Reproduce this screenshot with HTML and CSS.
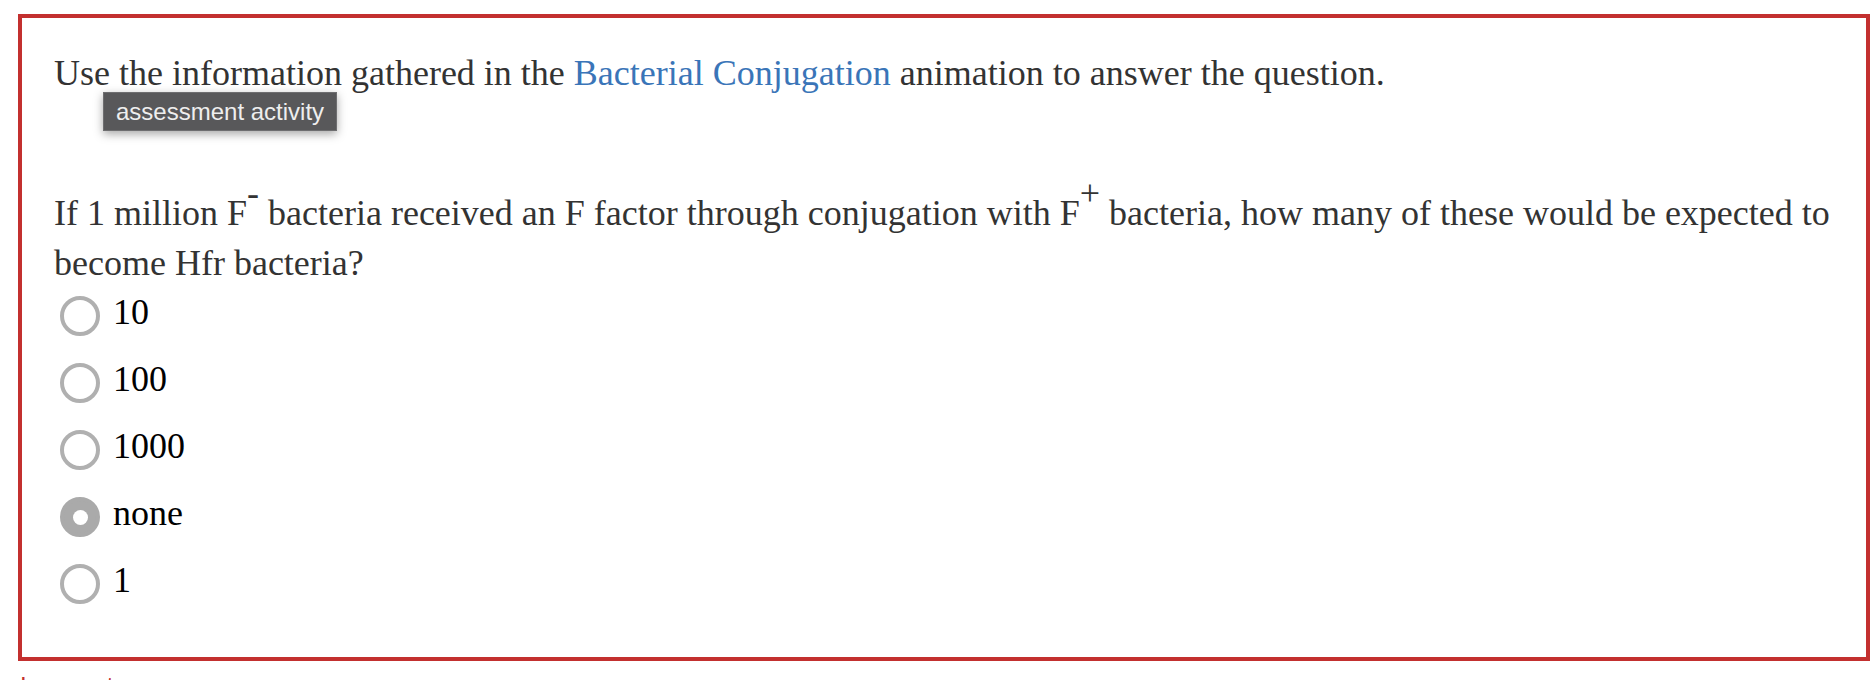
FILE: index.html
```html
<!DOCTYPE html>
<html>
<head>
<meta charset="utf-8">
<link rel="stylesheet" href="styles.css">
</head>
<body>
<div class="question">
  <p class="intro">Use the information gathered in the <a class="link" href="#">Bacterial Conjugation</a> animation to answer the question.</p>
  <div class="tooltip">assessment activity</div>
  <p class="stem">If 1 million F<sup class="sup">-</sup> bacteria received an F factor through conjugation with F<sup class="sup">+</sup> bacteria, how many of these would be expected to become Hfr bacteria?</p>
  <ul class="options">
    <li class="option"><span class="radio"></span><span class="label">10</span></li>
    <li class="option"><span class="radio"></span><span class="label">100</span></li>
    <li class="option"><span class="radio"></span><span class="label">1000</span></li>
    <li class="option"><span class="radio checked"></span><span class="label">none</span></li>
    <li class="option"><span class="radio"></span><span class="label">1</span></li>
  </ul>
</div>
<div class="feedback">Incorrect</div>
</body>
</html>
```
FILE: styles.css
```css
html, body {
  margin: 0;
  padding: 0;
  background: #ffffff;
}

body {
  font-family: "Liberation Serif", "Times New Roman", serif;
  font-size: 36px;
  color: #333333;
}

.question {
  position: relative;
  margin: 14px 2px 0 18px;
  border: 4px solid #c3302f;
  padding: 34px 32px 45px 32px;
}

.intro {
  margin: 0 0 93px 0;
  line-height: 43px;
}

.link {
  color: #3a75b8;
  text-decoration: none;
}

.tooltip {
  position: absolute;
  left: 81px;
  top: 74px;
  height: 37px;
  line-height: 37px;
  padding: 0 12px;
  background: #58585a;
  border: 1px solid #6e6e70;
  color: #eeeeee;
  font-family: "Liberation Sans", Arial, sans-serif;
  font-size: 24px;
  box-shadow: 0 3px 9px rgba(0, 0, 0, 0.35);
  white-space: nowrap;
}

.stem {
  margin: 0;
  line-height: 50px;
}

.sup {
  font-size: 1em;
  line-height: 0;
  vertical-align: 20px;
}

.options {
  list-style: none;
  margin: 0;
  padding: 0;
  display: flex;
  flex-direction: column;
  gap: 11px;
}

.option {
  display: flex;
  align-items: center;
  height: 56px;
  color: #000000;
}

.radio {
  box-sizing: border-box;
  width: 40px;
  height: 40px;
  margin-left: 6px;
  border: 4px solid #b0b0b0;
  border-radius: 50%;
  background: #ffffff;
  display: flex;
  align-items: center;
  justify-content: center;
}

.radio.checked {
  background: #aaaaaa;
  border-color: #aaaaaa;
}

.radio.checked::after {
  content: "";
  width: 15px;
  height: 15px;
  border-radius: 50%;
  background: #ffffff;
}

.label {
  margin-left: 13px;
  margin-top: -7px;
  line-height: 43px;
}

.feedback {
  margin: 10px 0 0 20px;
  color: #c3302f;
  font-family: "Liberation Sans", Arial, sans-serif;
  font-size: 24px;
  line-height: 30px;
}
```
